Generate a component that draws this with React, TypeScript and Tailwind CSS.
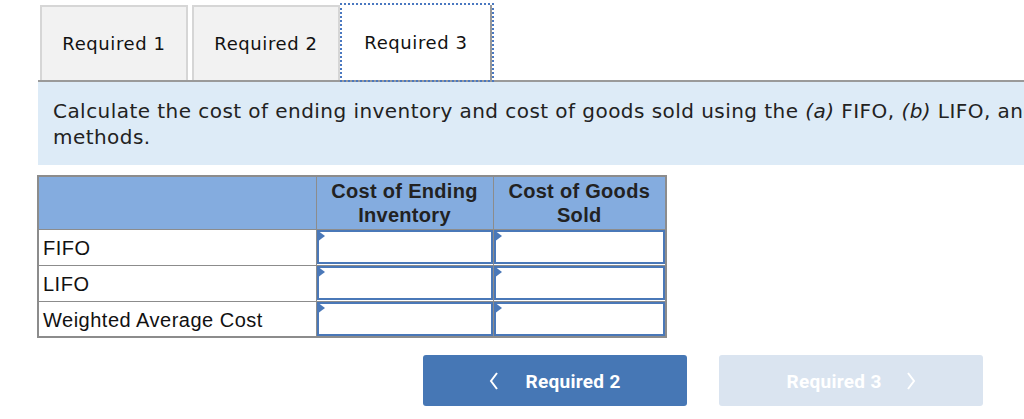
import React from "react";

const rows = ["FIFO", "LIFO", "Weighted Average Cost"];

function InputCell() {
  return (
    <td className="border border-[#8c8c8c] p-0 h-[36px]">
      <div className="relative h-[34px] border-2 border-[#4a78b8] bg-white">
        <span className="absolute left-[-2px] top-[-2px] w-0 h-0 border-y-[6px] border-y-transparent border-l-[8px] border-l-[#4a78b8]" />
      </div>
    </td>
  );
}

export default function App() {
  const tabFont = { fontFamily: '"DejaVu Sans", Verdana, sans-serif' };
  return (
    <div className="w-[1024px] h-[419px] overflow-hidden bg-white relative">
      <div className="pl-[40px] pt-[3px]">
        <div className="flex items-end h-[77px]" style={tabFont}>
          <div className="w-[148px] h-[75px] bg-[#f2f2f2] border-2 border-b-0 border-[#d6d6d6] flex items-center justify-center text-[18px] tracking-[0.6px] text-[#111]">
            Required 1
          </div>
          <div className="ml-[4px] w-[148px] h-[75px] bg-[#f2f2f2] border-2 border-b-0 border-[#d6d6d6] flex items-center justify-center text-[18px] tracking-[0.6px] text-[#111]">
            Required 2
          </div>
          <div className="w-[154px] h-[79px] border-2 border-dotted border-[#4a78c0] relative z-10 -mb-[2px]">
            <div className="h-full bg-white border-r-2 border-[#999] flex items-center justify-center text-[18px] tracking-[0.6px] text-[#111]">
              Required 3
            </div>
          </div>
        </div>
      </div>
      <div className="ml-[38px] border-t-2 border-[#9a9a9a]" />
      <div className="ml-[38px] w-[1100px] bg-[#ddebf7] h-[83px] pl-[15px] pt-[16px]">
        <p className="text-[20px] leading-[26px] tracking-[0.45px] text-[#222] whitespace-nowrap" style={tabFont}>
          Calculate the cost of ending inventory and cost of goods sold using the <i>(a)</i> FIFO, <i>(b)</i> LIFO, and <i>(c)</i> weighted average cost
          <br />
          methods.
        </p>
      </div>
      <div className="ml-[37px] mt-[10px]" style={{ fontFamily: '"Liberation Sans", Arial, sans-serif' }}>
        <table className="border-collapse border-2 border-[#8c8c8c]">
          <thead>
            <tr className="bg-[#84acdf] h-[53px]">
              <th className="w-[278px] border border-[#8c8c8c]" />
              <th className="w-[177px] border border-[#8c8c8c] text-[20px] leading-[24px] tracking-[0.3px] font-bold text-[#222] text-center">
                Cost of Ending
                <br />
                Inventory
              </th>
              <th className="w-[173px] border border-[#8c8c8c] text-[20px] leading-[24px] tracking-[0.3px] font-bold text-[#222] text-center">
                Cost of Goods
                <br />
                Sold
              </th>
            </tr>
          </thead>
          <tbody>
            {rows.map((r) => (
              <tr key={r}>
                <td className="border border-[#8c8c8c] px-[4px] text-[20px] tracking-[0.5px] text-[#111] h-[36px] pt-[2px]">{r}</td>
                <InputCell />
                <InputCell />
              </tr>
            ))}
          </tbody>
        </table>
      </div>
      <div className="flex gap-[32px] ml-[423px] mt-[17px]" style={{ fontFamily: "Roboto, sans-serif" }}>
        <button className="w-[264px] h-[51px] rounded-[3px] bg-[#4677b5] text-white text-[19px] tracking-[0.3px] font-bold flex items-center justify-center gap-[26px] pt-[3px]">
          <svg width="10" height="18" viewBox="0 0 10 18" fill="none" stroke="white" strokeWidth="2" className="-mt-[3px]">
            <path d="M8 1 L2 9 L8 17" />
          </svg>
          Required 2
        </button>
        <button className="w-[264px] h-[51px] rounded-[3px] bg-[#dae4f0] text-white text-[19px] tracking-[0.3px] font-bold flex items-center justify-center gap-[24px] pt-[3px]">
          Required 3
          <svg width="10" height="18" viewBox="0 0 10 18" fill="none" stroke="white" strokeWidth="2" className="-mt-[3px]">
            <path d="M2 1 L8 9 L2 17" />
          </svg>
        </button>
      </div>
    </div>
  );
}
